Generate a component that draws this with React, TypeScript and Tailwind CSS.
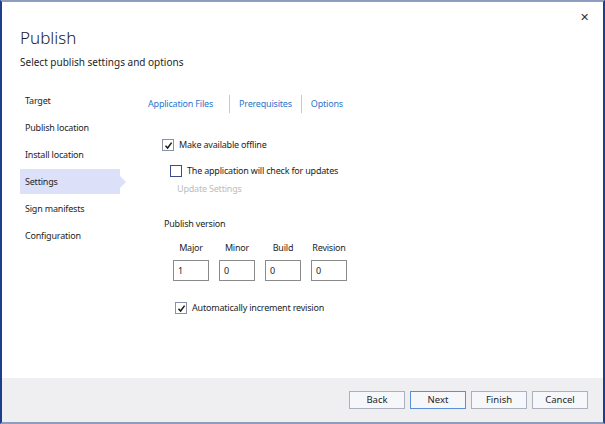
import React from 'react';

const font = { fontFamily: '"Noto Sans", "Open Sans", sans-serif' };

function Check({ checked, strong }: { checked?: boolean; strong?: boolean }) {
  return (
    <span
      className={
        'flex h-[12px] w-[12px] shrink-0 items-center justify-center bg-white ' +
        (strong ? 'border-[1.5px] border-[#3a4b86]' : 'border border-[#8a90a8]')
      }
    >
      {checked && (
        <svg width="9" height="9" viewBox="0 0 9 9">
          <path d="M1.5 4.8 L3.6 7 L7.6 1.6" fill="none" stroke="#1b1b1b" strokeWidth="1.5" />
        </svg>
      )}
    </span>
  );
}

const navItems = ['Target', 'Publish location', 'Install location', 'Settings', 'Sign manifests', 'Configuration'];
const versions = [
  { label: 'Major', value: '1' },
  { label: 'Minor', value: '0' },
  { label: 'Build', value: '0' },
  { label: 'Revision', value: '0' },
];

export default function App() {
  return (
    <div
      className="flex h-[424px] w-[605px] flex-col overflow-hidden border-x-2 border-t-2 border-b-2 border-x-[#1d3e8c] border-t-[#8e9cbf] border-b-[#8e9cbf] bg-white text-[#1e1e1e]"
      style={font}
    >
      {/* header */}
      <div className="relative h-[86px] shrink-0 pl-[18px]">
        <span className="absolute right-[14px] top-[7px] text-[11px] text-[#333]">✕</span>
        <div className="pt-[24px] text-[17px] font-light leading-[24px]">Publish</div>
        <div className="mt-[5px] text-[10px] leading-[14px]">Select publish settings and options</div>
      </div>

      {/* body */}
      <div className="flex flex-1 text-[9px] leading-[14px] tracking-[-0.2px]">
        <div className="ml-[18px] flex w-[100px] flex-col gap-[2px]">
          {navItems.map((n) => (
            <div
              key={n}
              className={'relative flex h-[25px] items-center pl-[5px] ' + (n === 'Settings' ? 'bg-[#dce1f9]' : '')}
            >
              {n}
              {n === 'Settings' && (
                <span className="absolute left-full top-[6.5px] h-0 w-0 border-y-[6px] border-l-[6px] border-y-transparent border-l-[#dce1f9]" />
              )}
            </div>
          ))}
        </div>

        <div className="ml-[20px] flex flex-1 flex-col">
          <div className="mt-[6px] flex h-[20px] items-center pl-[8px] text-[#2a77cc]">
            <span>Application Files</span>
            <span className="ml-[16px] mr-[9px] h-[18px] w-px bg-[#c9c9c9]" />
            <span>Prerequisites</span>
            <span className="mx-[9px] h-[18px] w-px bg-[#c9c9c9]" />
            <span>Options</span>
          </div>

          <div className="ml-[22px] mt-[24px] flex h-[14px] items-center gap-[5px]">
            <Check checked />
            <span>Make available offline</span>
          </div>
          <div className="ml-[30px] mt-[12px] flex h-[14px] items-center gap-[5px]">
            <Check strong />
            <span>The application will check for updates</span>
          </div>
          <div className="ml-[37px] mt-[4px] h-[14px] text-[#bdbdbd]">Update Settings</div>

          <div className="ml-[24px] mt-[21px] h-[14px]">Publish version</div>
          <div className="ml-[33px] mt-[10px] flex gap-[10px]">
            {versions.map((v) => (
              <div key={v.label} className="flex w-[36px] flex-col items-center">
                <span className="h-[14px]">{v.label}</span>
                <div className="mt-[5px] flex h-[21px] w-[36px] items-center border border-[#8a8a8a] pl-[4px]">
                  {v.value}
                </div>
              </div>
            ))}
          </div>

          <div className="ml-[35px] mt-[20px] flex h-[14px] items-center gap-[5px]">
            <Check checked />
            <span>Automatically increment revision</span>
          </div>
        </div>
      </div>

      {/* footer */}
      <div className="flex h-[44px] shrink-0 items-center justify-end gap-[5px] bg-[#efeff1] pr-[15px] text-[9.5px]">
        {['Back', 'Next', 'Finish', 'Cancel'].map((b) => (
          <div
            key={b}
            className={
              'flex h-[18px] w-[56px] items-center justify-center border bg-[#f6f7fb] ' +
              (b === 'Next' ? 'border-[#5b8fd3]' : 'border-[#aab0bd]')
            }
          >
            {b}
          </div>
        ))}
      </div>
    </div>
  );
}
